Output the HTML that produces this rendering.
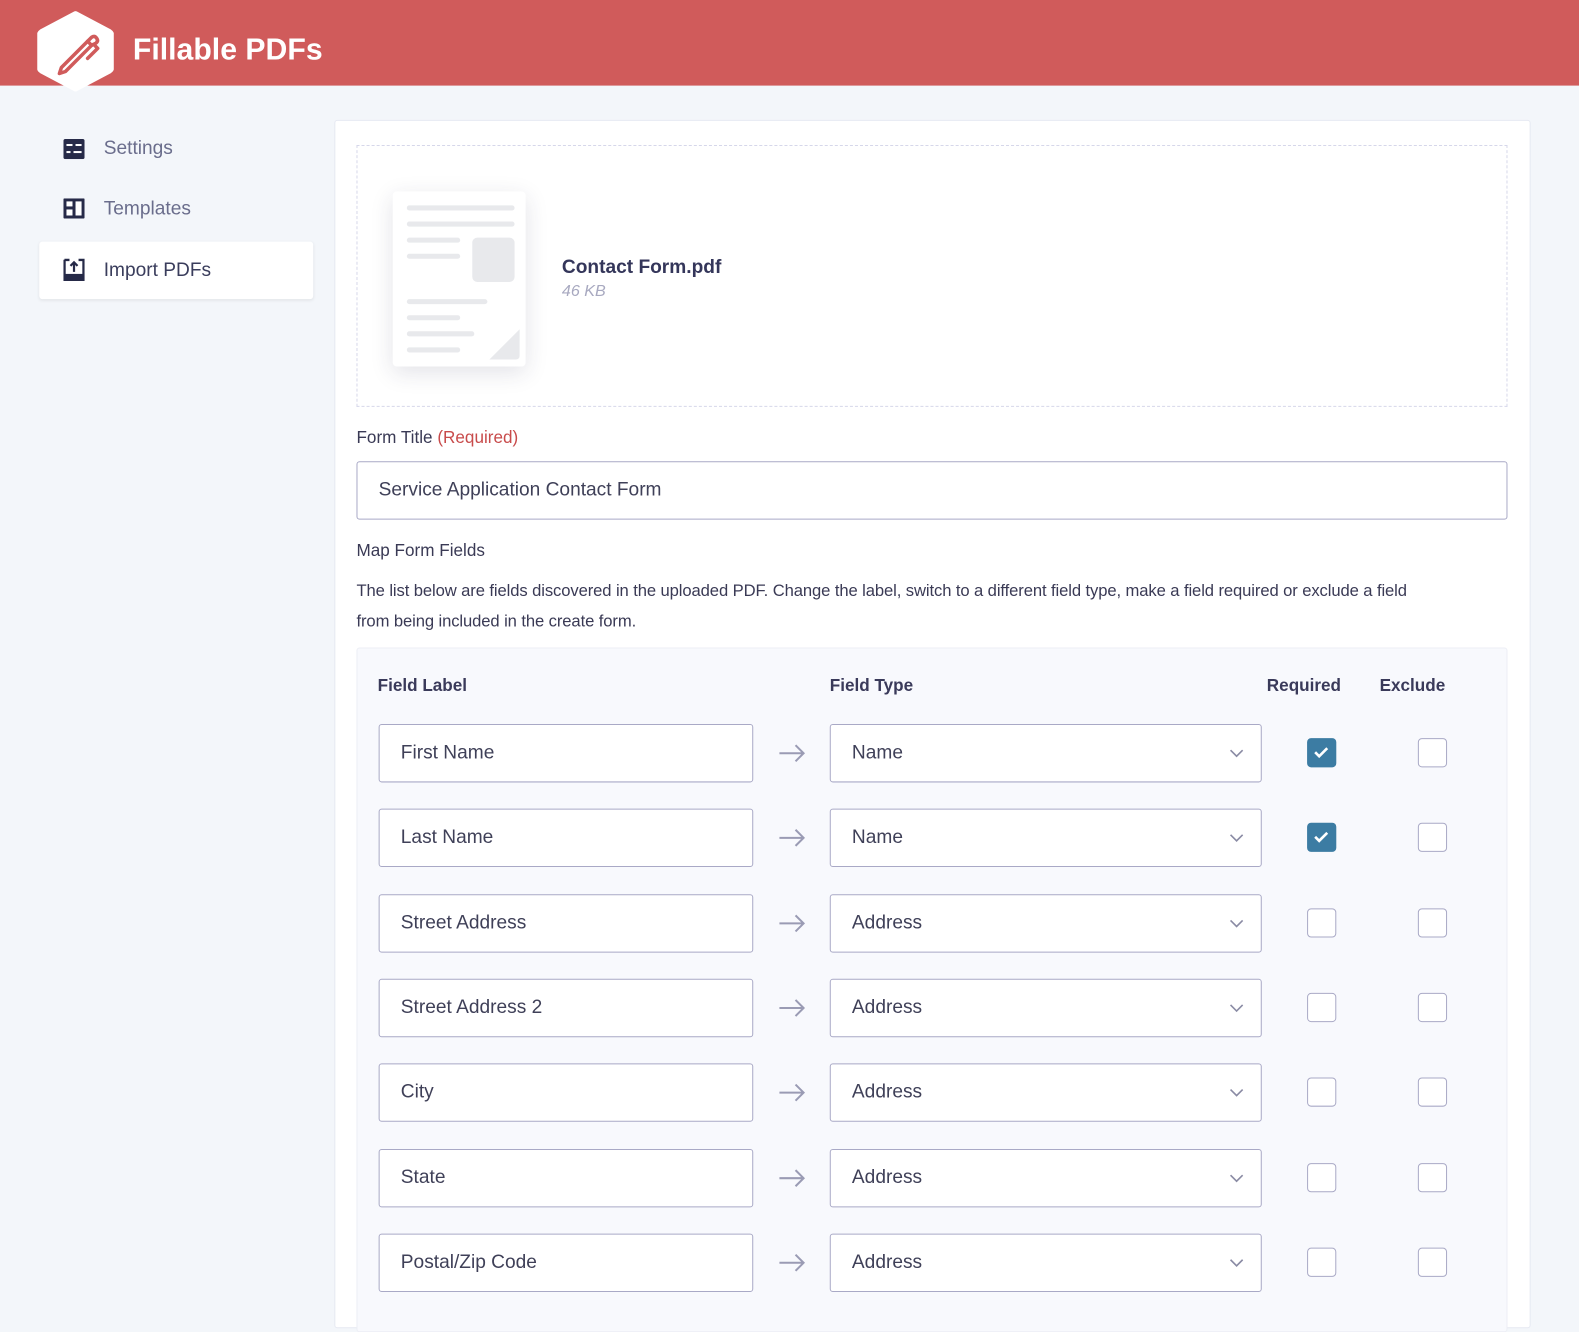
<!DOCTYPE html>
<html><head><meta charset="utf-8"><style>
*{box-sizing:border-box;margin:0;padding:0}
html,body{width:1579px;height:1306px;overflow:hidden;background:#f3f6fa}
#wrap{position:absolute;left:0;top:0;width:1568px;height:1300px;transform:scale(1.007);transform-origin:0 0;font-family:"Liberation Sans",sans-serif;color:#3a3a5a}
.hdr{position:absolute;left:0;top:0;width:1579px;height:85px;background:#d05b5b}
.abs{position:absolute}
.nav{position:absolute;left:62px;font-size:19px;color:#6a6d8c}
.card{position:absolute;left:332px;top:119px;width:1188px;height:1200px;background:#fff;border:1px solid #e6e9f2;border-radius:3px}
.inp{position:absolute;height:58px;background:#fff;border:1.5px solid #a9a9c6;border-radius:3px;font-size:19px;color:#3f4058;padding-left:21px;line-height:55px}
.cb{position:absolute;width:29px;height:29px;border:1.5px solid #a9a9c6;border-radius:4px;background:#fff}
.cb.on{background:#3c7ca3;border-color:#3c7ca3}
.lbl{position:absolute;font-size:17px;color:#3a3a55}
.th{position:absolute;top:671px;font-size:17px;font-weight:bold;color:#3a3a5a}
</style></head><body><div id="wrap">
<div class="hdr"></div>
<svg class="abs" style="left:37px;top:11px" width="76" height="80" viewBox="0 0 76 80"><path d="M38 2 L72 20 Q75 22 75 26 L75 54 Q75 58 72 60 L38 78 L4 60 Q1 58 1 54 L1 26 Q1 22 4 20 Z" fill="#fff" stroke="#fff" stroke-linejoin="round" stroke-width="4"/><g stroke="#d05b5b" stroke-width="3.5" fill="none" stroke-linecap="round" stroke-linejoin="round"><path d="M24 56 L22 62 L28 60 L54 34 L50 30 Z"/><path d="M50 30 L54 26 Q57 24 59 27 Q61 30 58 32 L54 34"/><path d="M56 33 L60 37 L50 47"/></g></svg>
<div class="abs" style="left:132px;top:33px;font-size:30px;font-weight:bold;color:#fff">Fillable PDFs</div>

<svg class="abs" style="left:63px;top:138px" width="21" height="20"><rect width="21" height="20" rx="2" fill="#262a48"/><rect x="3" y="5" width="6" height="2" fill="#fff"/><rect x="12" y="5" width="6" height="2" fill="#fff"/><rect x="3" y="12" width="4" height="2" fill="#fff"/><rect x="10" y="12" width="8" height="2" fill="#fff"/></svg>
<div class="nav" style="left:103px;top:137px">Settings</div>
<svg class="abs" style="left:63px;top:197px" width="21" height="20"><rect width="21" height="20" rx="1" fill="#262a48"/><rect x="3" y="3" width="6" height="5" fill="#fff"/><rect x="3" y="11" width="6" height="6" fill="#fff"/><rect x="12" y="3" width="6" height="14" fill="#fff"/></svg>
<div class="nav" style="left:103px;top:197px">Templates</div>
<div class="abs" style="left:39px;top:240px;width:272px;height:57px;background:#fff;border-radius:3px;box-shadow:0 1px 3px rgba(0,0,0,.08)"></div>
<svg class="abs" style="left:63px;top:257px" width="21" height="22"><path d="M1 1 H6 M15 1 H20 V21 H1 V1" fill="none" stroke="#262a48" stroke-width="2.5"/><rect x="1" y="15" width="20" height="6" fill="#262a48"/><path d="M10.5 13 V4 M7 7 L10.5 3.5 L14 7" stroke="#262a48" stroke-width="2.2" fill="none"/></svg>
<div class="nav" style="left:103px;top:258px;color:#3a3d5c">Import PDFs</div>

<div class="card"></div>
<div class="abs" style="left:354px;top:144px;width:1143px;height:260px;border:1.5px dashed #d6d7ea"></div>
<div class="abs" style="left:390px;top:190px;width:132px;height:174px;background:#fff;border-radius:4px;box-shadow:0 6px 22px rgba(40,40,80,.13)">
<svg width="132" height="174"><g fill="#e8e9ec"><rect x="14" y="14" width="107" height="5" rx="2.5"/><rect x="14" y="30" width="107" height="5" rx="2.5"/><rect x="14" y="46" width="53" height="5" rx="2.5"/><rect x="14" y="62" width="53" height="5" rx="2.5"/><rect x="79" y="46" width="42" height="44" rx="5"/><rect x="14" y="107" width="80" height="5" rx="2.5"/><rect x="14" y="123" width="53" height="5" rx="2.5"/><rect x="14" y="139" width="67" height="5" rx="2.5"/><rect x="14" y="155" width="53" height="5" rx="2.5"/><path d="M96 167 L126 137 L126 163 Q126 167 122 167 Z"/></g></svg></div>
<div class="abs" style="left:558px;top:255px;font-size:19px;font-weight:bold;color:#34365a">Contact Form.pdf</div>
<div class="abs" style="left:558px;top:281px;font-size:16px;font-style:italic;color:#a8a9c0">46 KB</div>

<div class="lbl" style="left:354px;top:425px">Form Title <span style="color:#c84b4b">(Required)</span></div>
<div class="inp" style="left:354px;top:458px;width:1143px;padding-left:21px">Service Application Contact Form</div>
<div class="lbl" style="left:354px;top:537px">Map Form Fields</div>
<div class="lbl" style="left:354px;top:572px;width:1070px;line-height:30px;font-size:16.5px;letter-spacing:-0.1px">The list below are fields discovered in the uploaded PDF. Change the label, switch to a different field type, make a field required or exclude a field from being included in the create form.</div>

<div class="abs" style="left:354px;top:643px;width:1143px;height:680px;background:#f8f9fd;border:1px solid #eceef5;border-radius:3px"></div>
<div class="th" style="left:375px">Field Label</div>
<div class="th" style="left:824px">Field Type</div>
<div class="th" style="left:1258px">Required</div>
<div class="th" style="left:1370px">Exclude</div>

<div id="rows"></div>
</div>
<script>
var r=[["First Name","Name",1,719],["Last Name","Name",1,803],["Street Address","Address",0,888],["Street Address 2","Address",0,972],["City","Address",0,1056],["State","Address",0,1141],["Postal/Zip Code","Address",0,1225]];
var h="";r.forEach(function(x){var t=x[3];
h+='<div class="inp" style="left:376px;top:'+t+'px;width:372px">'+x[0]+'</div>';
h+='<svg class="abs" style="left:773px;top:'+(t+20)+'px" width="27" height="18"><path d="M1 9 H25 M17 1 L25 9 L17 17" stroke="#9a9bb4" stroke-width="2" fill="none"/></svg>';
h+='<div class="inp" style="left:824px;top:'+t+'px;width:429px">'+x[1]+'<svg style="position:absolute;right:17px;top:24px" width="14" height="9"><path d="M1 1 L7 7 L13 1" stroke="#8a8ba4" stroke-width="1.6" fill="none"/></svg></div>';
h+='<div class="cb'+(x[2]?' on':'')+'" style="left:1298px;top:'+(t+14)+'px">'+(x[2]?'<svg width="26" height="26"><path d="M7 13 L11 17 L19 9" stroke="#fff" stroke-width="2.6" fill="none"/></svg>':'')+'</div>';
h+='<div class="cb" style="left:1408px;top:'+(t+14)+'px"></div>';});
document.getElementById("rows").innerHTML=h;
</script>
</body></html>
